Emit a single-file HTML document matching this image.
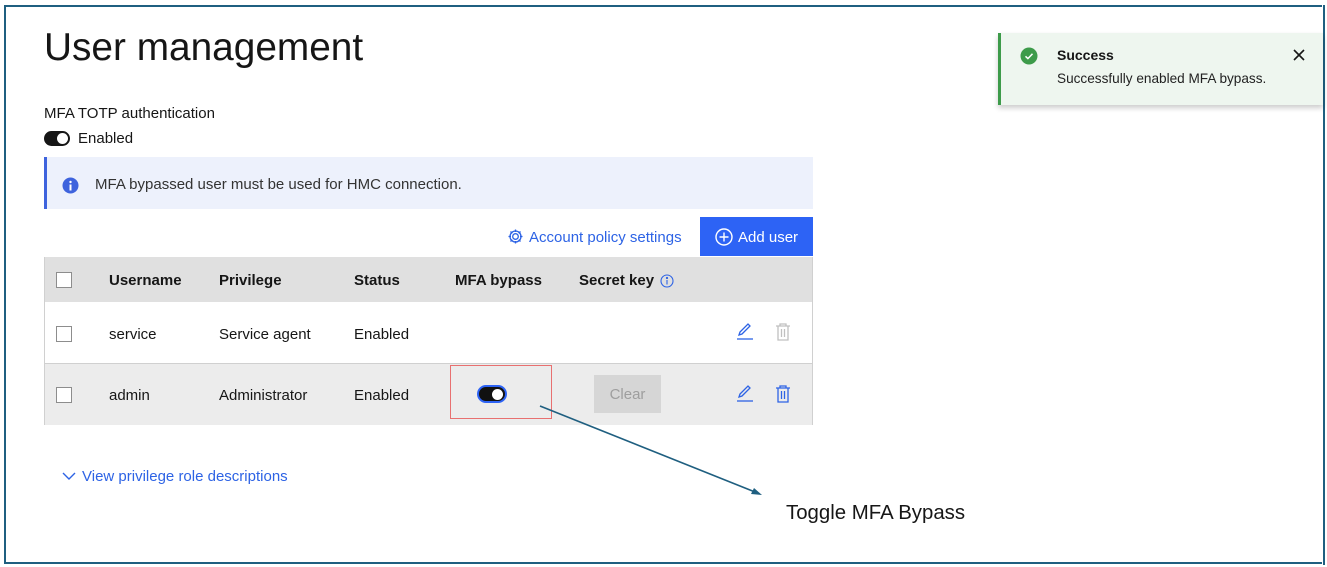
<!DOCTYPE html>
<html><head><style>
body{margin:0;width:1327px;height:567px;background:#fff;font-family:"Liberation Sans",sans-serif;color:#161616;position:relative;overflow:hidden}
.a{position:absolute;white-space:nowrap}
.frame{position:absolute;left:4px;top:5px;width:1318px;height:559px;border:2px solid #1f5f80;border-right:none;box-sizing:border-box}
.cb{position:absolute;width:14px;height:14px;border:1px solid #8d8d8d;background:#fff;left:56px}
.th{font-weight:bold;font-size:15px;top:272px}
.td{font-size:15px}
</style></head><body>
<div class="frame"></div>
<div style="position:absolute;left:1323px;top:5px;width:2px;height:560px;background:#1f5f80"></div>
<div class="a" style="left:44px;top:26px;font-size:38.8px;font-weight:300">User management</div>
<div class="a" style="left:44px;top:105px;font-size:15px">MFA TOTP authentication</div>
<div class="a" style="left:44px;top:131px;width:26px;height:15px;border-radius:8px;background:#161616"></div>
<div class="a" style="left:57px;top:133px;width:11px;height:11px;border-radius:50%;background:#fff"></div>
<div class="a" style="left:78px;top:130px;font-size:15px">Enabled</div>
<div class="a" style="left:44px;top:157px;width:769px;height:52px;background:#edf1fc;border-left:3px solid #3e63dd;box-sizing:border-box"></div>
<svg class="a" style="left:62px;top:177px" width="17" height="17"><circle cx="8.5" cy="8.5" r="8" fill="#3e63dd"/><rect x="7.5" y="7.5" width="2" height="6" fill="#fff"/><circle cx="8.5" cy="5" r="1.2" fill="#fff"/></svg>
<div class="a" style="left:95px;top:176px;font-size:15px;color:#333">MFA bypassed user must be used for HMC connection.</div>
<svg class="a" style="left:507px;top:228px" width="17" height="17" fill="none" stroke="#2d63e5" stroke-width="1.3"><circle cx="8.5" cy="8.5" r="2.8"/><path d="M8.5 1.5v2.5M8.5 13v2.5M1.5 8.5h2.5M13 8.5h2.5M3.5 3.5l1.8 1.8M11.7 11.7l1.8 1.8M3.5 13.5l1.8-1.8M11.7 5.3l1.8-1.8"/><circle cx="8.5" cy="8.5" r="5.5"/></svg>
<div class="a" style="left:529px;top:229px;font-size:15px;color:#2d63e5">Account policy settings</div>
<div class="a" style="left:700px;top:217px;width:113px;height:39px;background:#2d63f5"></div>
<svg class="a" style="left:715px;top:228px" width="18" height="18" fill="none" stroke="#fff" stroke-width="1.4"><circle cx="9" cy="9" r="8"/><path d="M9 4.5v9M4.5 9h9"/></svg>
<div class="a" style="left:738px;top:229px;font-size:15px;color:#fff">Add user</div>
<div class="a" style="left:44px;top:257px;width:769px;height:168px;border:1px solid #d0d0d0;box-sizing:border-box"></div>
<div class="a" style="left:45px;top:257px;width:767px;height:45px;background:#e0e0e0"></div>
<div class="a" style="left:45px;top:363px;width:767px;height:61px;background:#ececec;border-top:1px solid #d0d0d0"></div>
<div class="cb" style="top:272px"></div><div class="cb" style="top:326px"></div><div class="cb" style="top:387px"></div>
<div class="a th" style="left:109px">Username</div>
<div class="a th" style="left:219px">Privilege</div>
<div class="a th" style="left:354px">Status</div>
<div class="a th" style="left:455px">MFA bypass</div>
<div class="a th" style="left:579px">Secret key</div>
<svg class="a" style="left:660px;top:274px" width="14" height="14" fill="none" stroke="#2d63e5" stroke-width="1.1"><circle cx="7" cy="7" r="6"/><path d="M7 6v4.5"/><circle cx="7" cy="4" r=".6" fill="#2d63e5"/></svg>
<div class="a td" style="left:109px;top:326px">service</div>
<div class="a td" style="left:219px;top:326px">Service agent</div>
<div class="a td" style="left:354px;top:326px">Enabled</div>
<div class="a td" style="left:109px;top:387px">admin</div>
<div class="a td" style="left:219px;top:387px">Administrator</div>
<div class="a td" style="left:354px;top:387px">Enabled</div>
<div class="a" style="left:450px;top:365px;width:102px;height:54px;border:1px solid #e87070;box-sizing:border-box"></div>
<div class="a" style="left:477px;top:385px;width:30px;height:18px;border-radius:10px;background:#111;border:2px solid #2d63f5;box-sizing:border-box"></div>
<div class="a" style="left:492px;top:389px;width:11px;height:11px;border-radius:50%;background:#fff"></div>
<div class="a" style="left:594px;top:375px;width:67px;height:38px;background:#d6d6d6;color:#9e9e9e;font-size:15px;text-align:center;line-height:40px">Clear</div>
<svg class="a" style="left:736px;top:322px" width="18" height="18" fill="none" stroke="#2d63e5" stroke-width="1.3"><path d="M3 13l1-3 8-8 2 2-8 8z"/><path d="M1 17h16"/></svg>
<svg class="a" style="left:736px;top:384px" width="18" height="18" fill="none" stroke="#2d63e5" stroke-width="1.3"><path d="M3 13l1-3 8-8 2 2-8 8z"/><path d="M1 17h16"/></svg>
<svg class="a" style="left:775px;top:323px" width="16" height="18" fill="none" stroke="#c0c0c0" stroke-width="1.3"><path d="M1 3h14M5 3V1h6v2M3 3v14h10V3M6.5 6v8M9.5 6v8"/></svg>
<svg class="a" style="left:775px;top:385px" width="16" height="18" fill="none" stroke="#2d63e5" stroke-width="1.3"><path d="M1 3h14M5 3V1h6v2M3 3v14h10V3M6.5 6v8M9.5 6v8"/></svg>
<svg class="a" style="left:62px;top:471px" width="14" height="10" fill="none" stroke="#2d63e5" stroke-width="1.4"><path d="M1 2l6 6 6-6"/></svg>
<div class="a" style="left:82px;top:468px;font-size:15px;color:#2d63e5">View privilege role descriptions</div>
<svg class="a" style="left:0;top:0" width="1327" height="567"><line x1="540" y1="406" x2="755" y2="492" stroke="#1f5f80" stroke-width="1.6"/><path d="M762 495l-11-1 3-6z" fill="#1f5f80"/></svg>
<div class="a" style="left:786px;top:502px;font-size:20.4px">Toggle MFA Bypass</div>
<div class="a" style="left:998px;top:33px;width:325px;height:72px;background:#eef6ef;border-left:3px solid #3d9b4a;box-sizing:border-box;box-shadow:0 3px 5px rgba(0,0,0,.2)"></div>
<svg class="a" style="left:1020px;top:47px" width="18" height="18"><circle cx="9" cy="9" r="8.5" fill="#3d9b4a"/><path d="M5.5 9.3l2.4 2.3 4.6-4.8" fill="none" stroke="#fff" stroke-width="1.5"/></svg>
<div class="a" style="left:1057px;top:47px;font-size:14px;font-weight:bold">Success</div>
<div class="a" style="left:1057px;top:71px;font-size:13.6px;color:#222">Successfully enabled MFA bypass.</div>
<svg class="a" style="left:1293px;top:49px" width="12" height="12" stroke="#161616" stroke-width="1.6"><path d="M1 1l10 10M11 1L1 11"/></svg>
</body></html>
